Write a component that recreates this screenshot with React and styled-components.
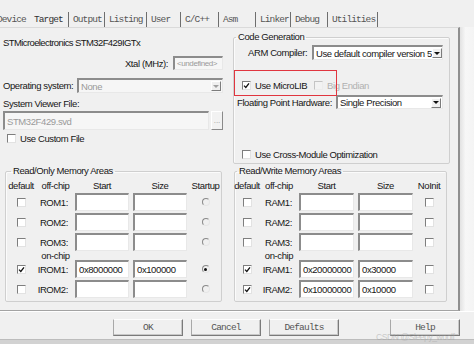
import React from 'react';
import styled, { createGlobalStyle } from 'styled-components';

const UI_FONT = `"Liberation Sans", Arial, sans-serif`;
const MONO_FONT = `"Liberation Mono", "Courier New", monospace`;

const GlobalStyle = createGlobalStyle`
  html, body {
    margin: 0;
    padding: 0;
    background: #f0f0f0;
  }
  body {
    width: 474px;
    height: 344px;
    overflow: hidden;
  }
  * {
    box-sizing: border-box;
  }
`;

const Window = styled.div`
  position: relative;
  width: 474px;
  height: 344px;
  display: flex;
  flex-direction: column;
  background: #f0f0f0;
  font-family: ${UI_FONT};
  font-size: 9.5px;
  letter-spacing: -0.4px;
  color: #161616;
  overflow: hidden;
`;

const TabBar = styled.div`
  height: 27px;
  display: flex;
  align-items: flex-end;
  margin-left: -7px;
`;

const Tab = styled.div`
  flex: none;
  width: ${(p) => p.$w}px;
  height: 15px;
  padding-left: 4px;
  border-right: 1px solid ${(p) => (p.$plain ? 'transparent' : '#6e6e6e')};
  font-family: ${MONO_FONT};
  font-size: 9.5px;
  letter-spacing: -0.9px;
  line-height: 15px;
  color: ${(p) => (p.$active ? '#333' : '#555')};
  white-space: nowrap;
`;

const Body = styled.div`
  display: flex;
  height: 284px;
`;

const Sheet = styled.div`
  width: 460px;
  height: 284px;
  padding-left: 3px;
  border-top: 1px solid #dadada;
  border-right: 2px solid #8f8f8f;
  border-bottom: 1px solid #a3a3a3;
`;

const RightStrip = styled.div`
  flex: 1;
  background: linear-gradient(90deg, #e2e2e2, #f7f7f7 40%, #f4f4f4);
`;

const TopRow = styled.div`
  display: grid;
  grid-template-columns: 220px 217px;
  column-gap: 10px;
  height: 137px;
`;

const DeviceInfo = styled.div`
  display: flex;
  flex-direction: column;
`;

const DeviceName = styled.div`
  margin-top: 9px;
  line-height: 12px;
  letter-spacing: -0.6px;
`;

const Row = styled.div`
  display: flex;
  align-items: center;
  height: ${(p) => p.$h || 12}px;
  margin-top: ${(p) => p.$mt || 0}px;
  padding-left: ${(p) => p.$pl || 0}px;
  padding-right: ${(p) => p.$pr || 0}px;
  justify-content: ${(p) => (p.$end ? 'flex-end' : 'flex-start')};
  white-space: nowrap;
`;

const Label = styled.span`
  flex: ${(p) => (p.$grow ? 1 : 'none')};
  margin-right: ${(p) => p.$mr || 0}px;
`;

const Field = styled.div`
  flex: none;
  width: ${(p) => (p.$w ? `${p.$w}px` : 'auto')};
  height: ${(p) => p.$h || 18}px;
  display: flex;
  align-items: center;
  padding-left: 2px;
  font-size: ${(p) => p.$fs || 9.5}px;
  background: ${(p) => (p.$disabled ? '#f6f6f6' : '#fff')};
  border-top: 2px solid #8c8c8c;
  border-left: 2px solid #8c8c8c;
  border-bottom: 1px solid #e8e8e8;
  border-right: 1px solid #e8e8e8;
  color: ${(p) => (p.$disabled ? '#9a9a9a' : '#161616')};
  white-space: nowrap;
  overflow: hidden;
`;

const Select = styled(Field)`
  padding-right: 1px;
  justify-content: space-between;
`;

const DropButton = styled.span`
  flex: none;
  width: 10px;
  height: 10px;
  display: flex;
  align-items: center;
  justify-content: center;
  background: #f0f0f0;
  border: 1px solid;
  border-color: #fff #7c7c7c #7c7c7c #fff;

  &::after {
    content: '';
    border-left: 3px solid transparent;
    border-right: 3px solid transparent;
    border-top: 3px solid ${(p) => (p.$disabled ? '#a0a0a0' : '#111')};
  }
`;

const SmallButton = styled.div`
  flex: none;
  width: 12px;
  height: 19px;
  margin-left: 2px;
  display: flex;
  align-items: center;
  justify-content: center;
  font-size: 8px;
  letter-spacing: 0;
  color: #9a9a9a;
  background: #f2f2f2;
  border: 1px solid;
  border-color: #fff #8a8a8a #8a8a8a #fff;
`;

const Box = styled.span`
  flex: none;
  width: 9px;
  height: 9px;
  display: inline-flex;
  align-items: center;
  justify-content: center;
  background: ${(p) => (p.$disabled ? '#f2f2f2' : '#fff')};
  border: 1px solid;
  border-color: ${(p) =>
    p.$disabled ? '#c4c4c4 #ececec #ececec #c4c4c4' : '#7e7e7e #e2e2e2 #e2e2e2 #7e7e7e'};
`;

const CheckField = styled.span`
  display: inline-flex;
  align-items: center;
  gap: 4px;
  width: ${(p) => (p.$w ? `${p.$w}px` : 'auto')};
  color: ${(p) => (p.$disabled ? '#b0b0b0' : 'inherit')};
`;

const Radio = styled.span`
  width: 8px;
  height: 8px;
  border-radius: 50%;
  display: inline-flex;
  align-items: center;
  justify-content: center;
  border: 1px solid;
  border-color: #8a8a8a #e6e6e6 #e6e6e6 #8a8a8a;

  &::after {
    content: '';
    display: ${(p) => (p.$on ? 'block' : 'none')};
    width: 3px;
    height: 3px;
    border-radius: 50%;
    background: #111;
  }
`;

const Group = styled.fieldset`
  margin: ${(p) => p.$mt || 0}px 0 0 0;
  padding: 0;
  min-width: 0;
  height: ${(p) => p.$h}px;
  border: 1px solid #cfcfcf;
  border-radius: 2px;
  box-shadow: inset 1px 1px 0 #fbfbfb;
`;

const Legend = styled.legend`
  margin-left: ${(p) => p.$ml || 2}px;
  padding: 0 2px;
  line-height: 12px;
`;

const MemRow = styled.div`
  display: grid;
  grid-template-columns: 217px 213px;
  column-gap: 12px;
  margin-left: 2px;
`;

const MemGrid = styled.div`
  display: grid;
  grid-template-columns: ${(p) => p.$cols};
  grid-template-rows: 13px 20px 20px 20px 7px 20px 20px;
  column-gap: 4px;
  align-items: center;
  padding-top: 2px;
`;

const Head = styled.span`
  justify-self: center;
  white-space: nowrap;
`;

const RowLabel = styled.span`
  justify-self: end;
  padding-right: 3px;
  white-space: nowrap;
`;

const Cell = styled.span`
  justify-self: center;
  display: inline-flex;
`;

const Spacer = styled.span``;

const ButtonBar = styled.div`
  height: 28px;
  display: flex;
  gap: 8px;
  padding: 7px 14px 0 113px;
  border-top: 1px solid #fff;
`;

const Button = styled.div`
  width: 70px;
  height: 17px;
  margin-left: ${(p) => (p.$push ? 'auto' : '0')};
  display: flex;
  align-items: center;
  justify-content: center;
  font-family: ${MONO_FONT};
  font-size: 9.5px;
  letter-spacing: -0.8px;
  color: #555;
  background: #f0f0f0;
  border: 1px solid;
  border-color: #fdfdfd #7a7a7a #7a7a7a #a8a8a8;
  box-shadow: inset -1px -1px 0 #c8c8c8;
`;

const BottomStrip = styled.div`
  flex: 1;
  background: #d2d2d2;
  border-top: 1px solid #bcbcbc;
`;

const Highlight = styled.div`
  position: absolute;
  left: 234px;
  top: 70px;
  width: 103px;
  height: 26px;
  border: 1.5px solid #e0353f;
  pointer-events: none;
`;

const Watermark = styled.div`
  position: absolute;
  left: 376px;
  top: 333px;
  font-size: 8.5px;
  line-height: 9px;
  color: rgba(160, 160, 160, 0.5);
  white-space: nowrap;
`;

function Tick() {
  return (
    <svg width="7" height="7" viewBox="0 0 7 7">
      <path d="M1 3.6 L2.8 5.4 L6 1.3" fill="none" stroke="#111" strokeWidth="1.3" />
    </svg>
  );
}

function Check({ on, disabled, label, w }) {
  return (
    <CheckField $disabled={disabled} $w={w}>
      <Box $disabled={disabled}>{on && <Tick />}</Box>
      {label && <span>{label}</span>}
    </CheckField>
  );
}

function Dropdown({ w, h, value, disabled }) {
  return (
    <Select $w={w} $h={h} $disabled={disabled}>
      <span>{value}</span>
      <DropButton $disabled={disabled} />
    </Select>
  );
}

const tabs = [
  { name: 'Device', w: 37, plain: true },
  { name: 'Target', w: 39, active: true },
  { name: 'Output', w: 36 },
  { name: 'Listing', w: 42 },
  { name: 'User', w: 34 },
  { name: 'C/C++', w: 38 },
  { name: 'Asm', w: 37 },
  { name: 'Linker', w: 35 },
  { name: 'Debug', w: 37 },
  { name: 'Utilities', w: 50 },
];

const romRows = [
  { name: 'ROM1:' },
  { name: 'ROM2:' },
  { name: 'ROM3:' },
  { chip: true },
  { name: 'IROM1:', on: true, start: '0x8000000', size: '0x100000', startup: true },
  { name: 'IROM2:' },
];

const ramRows = [
  { name: 'RAM1:' },
  { name: 'RAM2:' },
  { name: 'RAM3:' },
  { chip: true },
  { name: 'IRAM1:', on: true, start: '0x20000000', size: '0x30000' },
  { name: 'IRAM2:', on: true, start: '0x10000000', size: '0x10000' },
];

function MemoryTable({ rows, cols, last, radio }) {
  return (
    <MemGrid $cols={cols}>
      <Head>default</Head>
      <Head>off-chip</Head>
      <Head>Start</Head>
      <Head>Size</Head>
      <Head>{last}</Head>
      {rows.map((r, i) =>
        r.chip ? (
          <React.Fragment key={i}>
            <Spacer />
            <Head>on-chip</Head>
            <Spacer />
            <Spacer />
            <Spacer />
          </React.Fragment>
        ) : (
          <React.Fragment key={i}>
            <Cell>
              <Check on={r.on} />
            </Cell>
            <RowLabel>{r.name}</RowLabel>
            <Field $h={18}>{r.start}</Field>
            <Field $h={18}>{r.size}</Field>
            <Cell>{radio ? <Radio $on={r.startup} /> : <Check />}</Cell>
          </React.Fragment>
        )
      )}
    </MemGrid>
  );
}

export default function App() {
  return (
    <Window>
      <GlobalStyle />
      <TabBar>
        {tabs.map((t) => (
          <Tab key={t.name} $w={t.w} $plain={t.plain} $active={t.active}>
            {t.name}
          </Tab>
        ))}
      </TabBar>

      <Body>
        <Sheet>
          <TopRow>
            <DeviceInfo>
              <DeviceName>STMicroelectronics STM32F429IGTx</DeviceName>
              <Row $end $h={14} $mt={7}>
                <Label $mr={5}>Xtal (MHz):</Label>
                <Field $w={50} $h={14} $fs={8} $disabled>
                  &lt;undefined&gt;
                </Field>
              </Row>
              <Row $h={15} $mt={8}>
                <Label $grow>Operating system:</Label>
                <Dropdown w={146} h={15} value="None" disabled />
              </Row>
              <Row $mt={4}>System Viewer File:</Row>
              <Row $h={19} $mt={2}>
                <Field $w={206} $h={19} $disabled>
                  STM32F429.svd
                </Field>
                <SmallButton>...</SmallButton>
              </Row>
              <Row $mt={2} $pl={4}>
                <Check label="Use Custom File" />
              </Row>
            </DeviceInfo>

            <Group $mt={3} $h={133}>
              <Legend>Code Generation</Legend>
              <Row $h={15} $mt={2} $pl={14} $pr={6}>
                <Label $grow>ARM Compiler:</Label>
                <Dropdown w={131} h={15} value="Use default compiler version 5" />
              </Row>
              <Row $mt={19} $pl={8}>
                <Check on label="Use MicroLIB" w={72} />
                <Check disabled label="Big Endian" />
              </Row>
              <Row $h={14} $mt={4} $pl={3} $pr={6}>
                <Label $grow>Floating Point Hardware:</Label>
                <Dropdown w={107} h={14} value="Single Precision" />
              </Row>
              <Row $mt={39} $pl={8}>
                <Check label="Use Cross-Module Optimization" />
              </Row>
            </Group>
          </TopRow>

          <MemRow>
            <Group $h={137}>
              <Legend $ml={5}>Read/Only Memory Areas</Legend>
              <MemoryTable rows={romRows} cols="30px 31px 54px 54px 29px" last="Startup" radio />
            </Group>
            <Group $h={137}>
              <Legend>Read/Write Memory Areas</Legend>
              <MemoryTable rows={ramRows} cols="24px 32px 55px 55px 24px" last="NoInit" />
            </Group>
          </MemRow>
        </Sheet>
        <RightStrip />
      </Body>

      <ButtonBar>
        <Button>OK</Button>
        <Button>Cancel</Button>
        <Button>Defaults</Button>
        <Button $push>Help</Button>
      </ButtonBar>
      <BottomStrip />

      <Highlight />
      <Watermark>CSDN @Sleepy_woolf</Watermark>
    </Window>
  );
}
